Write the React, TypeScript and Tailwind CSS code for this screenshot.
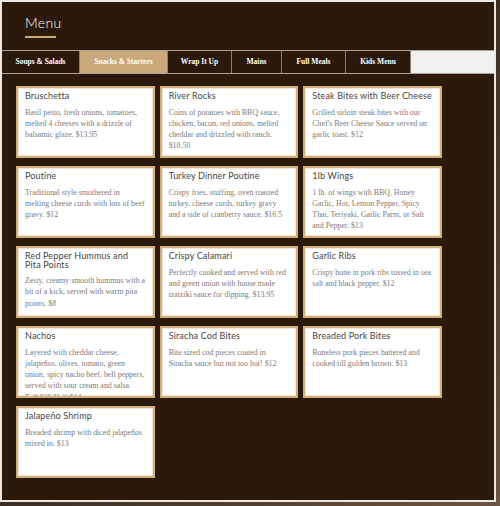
import React from 'react';

type Item = { name: string; desc: string };

const tabs = ['Soups & Salads', 'Snacks & Starters', 'Wrap It Up', 'Mains', 'Full Meals', 'Kids Menu'];
const tabWidths = ['w-[78px]', 'w-[88px]', 'w-[64px]', 'w-[50px]', 'w-[64px]', 'w-[65px]'];

const items: Item[] = [
  { name: 'Bruschetta', desc: 'Basil pesto, fresh onions, tomatoes, melted 4 cheeses with a drizzle of balsamic glaze. $13.95' },
  { name: 'River Rocks', desc: 'Coins of potatoes with BBQ sauce, chicken, bacon, red onions, melted cheddar and drizzled with ranch. $10.50' },
  { name: 'Steak Bites with Beer Cheese', desc: "Grilled sirloin steak bites with our Chef's Beer Cheese Sauce served on garlic toast. $12" },
  { name: 'Poutine', desc: 'Traditional style smothered in melting cheese curds with lots of beef gravy. $12' },
  { name: 'Turkey Dinner Poutine', desc: 'Crispy fries, stuffing, oven roasted turkey, cheese curds, turkey gravy and a side of cranberry sauce. $16.5' },
  { name: '1lb Wings', desc: '1 lb. of wings with BBQ, Honey Garlic, Hot, Lemon Pepper, Spicy Thai, Teriyaki, Garlic Parm, or Salt and Pepper. $13' },
  { name: 'Red Pepper Hummus and Pita Points', desc: 'Zesty, creamy smooth hummus with a bit of a kick, served with warm pita points. $8' },
  { name: 'Crispy Calamari', desc: 'Perfectly cooked and served with red and green onion with house made tzatziki sauce for dipping. $13.95' },
  { name: 'Garlic Ribs', desc: 'Crispy bone in pork ribs tossed in sea salt and black pepper. $12' },
  { name: 'Nachos', desc: 'Layered with cheddar cheese, jalapeños, olives, tomato, green onion, spicy nacho beef, bell peppers, served with sour cream and salsa. Full $20 Half $14' },
  { name: 'Siracha Cod Bites', desc: 'Bite sized cod pieces coated in Siracha sauce but not too hot! $12' },
  { name: 'Breaded Pork Bites', desc: 'Boneless pork pieces battered and cooked till golden brown. $13' },
  { name: 'Jalapeño Shrimp', desc: 'Breaded shrimp with diced jalapeños mixed in. $13' },
];

const MenuCard: React.FC<{ item: Item }> = ({ item }) => (
  <div className="h-[72px] overflow-hidden border-2 border-[#d2ae7e] bg-white px-[7px] pt-[4px] shadow-[inset_0_0_0_1px_#f3e6d2]">
    <h3 className="text-[9px] leading-[8.5px] text-[#444] font-['Lato','Open_Sans',sans-serif] tracking-[0.15px]">
      {item.name}
    </h3>
    <p className="mt-[6px] text-[7.9px] leading-[11.3px] text-[#7a7a7a] font-['Liberation_Serif',serif]">
      {item.desc}
    </p>
  </div>
);

export default function App() {
  return (
    <div className="w-[500px] h-[506px] overflow-hidden bg-gradient-to-br from-[#5a4634] via-[#3b2e24] to-[#6b5642]">
      {/* ── Menu panel ── */}
      <div className="w-[496px] h-[502px] border-2 border-[#ece8e4] bg-[#2b1a0c] flex flex-col">
        <header className="h-[48px] shrink-0 pl-[23px] pt-[13px]">
          <h1 className="text-[14px] leading-[16px] text-white font-['Lato','Open_Sans',sans-serif] font-light tracking-[0.3px]">
            Menu
          </h1>
          <div className="mt-[5px] h-[2px] w-[31px] bg-[#c9a677]" />
        </header>

        {/* Tabs */}
        <nav className="flex h-[24px] shrink-0 border-y border-[#a9a29b] bg-[#f3f1ef]">
          {tabs.map((t, i) => (
            <div
              key={t}
              className={`${tabWidths[i]} flex items-center justify-center border-r border-[#8a7f76] text-[7.5px] font-bold text-white font-['Liberation_Serif',serif] ${
                i === 1 ? 'bg-[#c9a87a]' : 'bg-[#2b1a0c]'
              }`}
            >
              {t}
            </div>
          ))}
        </nav>

        {/* Items */}
        <section className="grid w-[440px] grid-cols-3 gap-x-[5px] gap-y-[8px] pl-[14px] pt-[12px]">
          {items.map((it) => (
            <MenuCard key={it.name} item={it} />
          ))}
        </section>
      </div>
    </div>
  );
}
